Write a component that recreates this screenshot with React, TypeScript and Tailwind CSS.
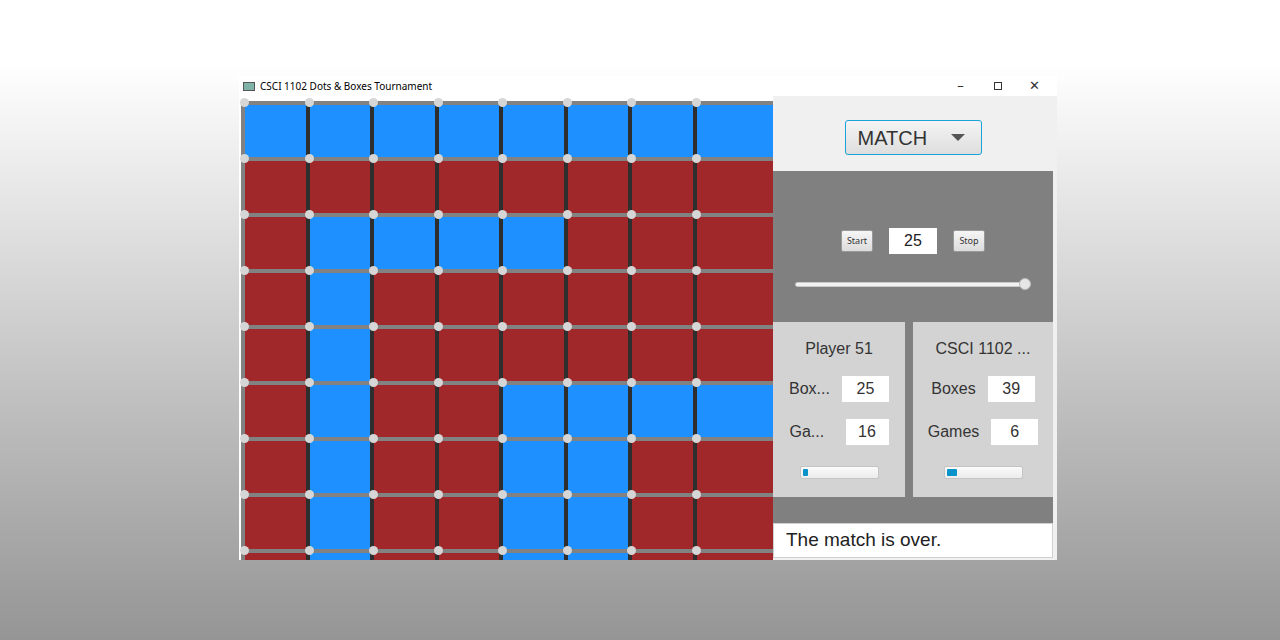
const B = "bg-[#1e90ff]";
const R = "bg-[#a0282a]";
const rows = [
  "BBBBBBBB",
  "RRRRRRRR",
  "RBBBBRRR",
  "RBRRRRRR",
  "RBRRRRRR",
  "RBRRBBBB",
  "RBRRBBRR",
  "RBRRBBRR",
  "RBRRBBRR",
];
const colX = [0, 65, 129, 194, 258, 323, 387, 452];

export default function App() {
  return (
    <div className="w-[1280px] h-[640px] bg-gradient-to-b from-[#ffffff] from-10% to-[#959595] relative overflow-hidden" style={{ fontFamily: "'Liberation Sans', Arial, sans-serif" }}>
      <div className="absolute left-[239px] top-[76px] w-[818px] h-[484px] bg-white flex flex-col">
        <div className="h-[20px] flex items-center px-[4px] text-[10px] text-black" style={{ fontFamily: "'Noto Sans', sans-serif" }}>
          <div className="w-[12px] h-[9px] border border-[#555] bg-[#7fb3a8] mr-[5px]"></div>
          <span>CSCI 1102 Dots &amp; Boxes Tournament</span>
          <div className="ml-auto flex items-center text-[13px] text-[#333]">
            <span className="w-[37px] text-center">–</span>
            <span className="w-[37px] flex justify-center"><span className="w-[8px] h-[8px] border border-[#333]"></span></span>
            <span className="w-[37px] text-center">✕</span>
          </div>
        </div>
        <div className="flex flex-1 min-h-0">
          <div className="w-[534px] h-full pl-[2px] pt-[5px] overflow-hidden relative">
            <div className="bg-[#2e2e2e] w-[532px] h-[504px] flex flex-col">
              {rows.map((r, i) => (
                <div key={i} className="flex h-[56px] shrink-0">
                  {r.split("").map((c, j) => (
                    <div key={j} className={`${j === 7 ? "flex-1" : "w-[64.5px]"} h-full border-t-4 border-[#828282] ${j === 0 ? "border-l-4 border-l-[#828282]" : "border-l-4 border-l-[#2e2e2e]"}`}>
                      <div className={`w-full h-full ${c === "B" ? B : R}`}></div>
                    </div>
                  ))}
                </div>
              ))}
            </div>
            {rows.map((_, i) =>
              colX.map((x, j) => (
                <div key={i + "-" + j} className="absolute w-[9px] h-[9px] rounded-full bg-[#d6d6d6]" style={{ left: x + 1, top: 5 + i * 56 - 3 }}></div>
              ))
            )}
          </div>
          <div className="w-[280px] flex flex-col bg-[#f0f0f0]">
            <div className="h-[75px] flex items-center justify-center pt-[8px]">
              <div className="w-[137px] h-[35px] border border-[#1aa3d9] rounded-[3px] bg-gradient-to-b from-[#f4f4f4] to-[#dedede] flex items-center px-[12px] text-[20px] text-[#333]">
                <span>MATCH</span>
                <span className="ml-auto w-0 h-0 border-l-[7px] border-r-[7px] border-t-[7px] border-l-transparent border-r-transparent border-t-[#555] mr-[4px]"></span>
              </div>
            </div>
            <div className="h-[151px] bg-[#808080] flex flex-col items-center">
              <div className="flex items-center mt-[57px] gap-[16px]">
                <div className="w-[32px] h-[22px] rounded-[2px] bg-gradient-to-b from-[#f6f6f6] to-[#dcdcdc] border border-[#999] text-[9px] text-[#333] flex items-center justify-center" style={{ fontFamily: "'Noto Sans', sans-serif" }}>Start</div>
                <div className="w-[48px] h-[26px] bg-white text-[16px] text-[#222] flex items-center justify-center">25</div>
                <div className="w-[32px] h-[22px] rounded-[2px] bg-gradient-to-b from-[#f6f6f6] to-[#dcdcdc] border border-[#999] text-[9px] text-[#333] flex items-center justify-center" style={{ fontFamily: "'Noto Sans', sans-serif" }}>Stop</div>
              </div>
              <div className="relative w-[236px] h-[12px] mt-[24px] flex items-center">
                <div className="w-full h-[5px] rounded-full bg-[#f2f2f2] border border-[#c9c9c9]"></div>
                <div className="absolute right-0 w-[12px] h-[12px] rounded-full bg-[#e6e6e6] border border-[#bbb]"></div>
              </div>
            </div>
            <div className="h-[175px] bg-[#808080] flex gap-[8px]">
              {[
                { name: "Player 51", a: "Box...", av: "25", b: "Ga...", bv: "16", w: 132, bar: 5 },
                { name: "CSCI 1102 ...", a: "Boxes", av: "39", b: "Games", bv: "6", w: 140, bar: 10 },
              ].map((p, k) => (
                <div key={k} className="bg-[#d3d3d3] flex flex-col items-center text-[16px] text-[#333]" style={{ width: p.w }}>
                  <div className="mt-[15px] h-[20px]">{p.name}</div>
                  <div className="flex items-center mt-[19px] gap-[12px]">
                    <span>{p.a}</span>
                    <div className="w-[47px] h-[26px] bg-white flex items-center justify-center">{p.av}</div>
                  </div>
                  <div className="flex items-center mt-[17px] gap-[12px]">
                    <span className={k === 0 ? "w-[44px]" : ""}>{p.b}</span>
                    <div className={`${k === 0 ? "w-[43px]" : "w-[47px]"} h-[26px] bg-white flex items-center justify-center`}>{p.bv}</div>
                  </div>
                  <div className="w-[79px] h-[13px] mt-[21px] bg-gradient-to-b from-[#fafafa] to-[#ececec] border border-[#c4c4c4] rounded-[2px] p-[2px]">
                    <div className="h-full bg-[#0a93c9] rounded-[1px]" style={{ width: p.bar }}></div>
                  </div>
                </div>
              ))}
            </div>
            <div className="h-[26px] bg-[#808080]"></div>
            <div className="h-[35px] bg-white border border-[#d0d0d0] flex items-center px-[12px] text-[19px] text-[#222]">The match is over.</div>
          </div>
          <div className="w-[4px] bg-[#f0f0f0]"></div>
        </div>
      </div>
    </div>
  );
}
